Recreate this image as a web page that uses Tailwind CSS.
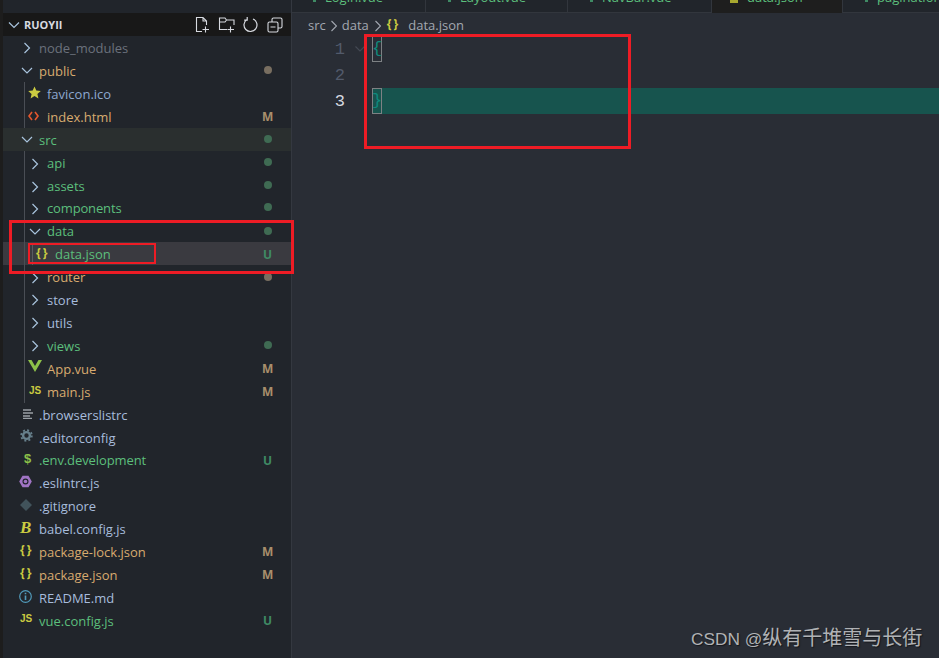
<!DOCTYPE html>
<html>
<head>
<meta charset="utf-8">
<script src="https://cdn.jsdelivr.net/npm/@tailwindcss/browser@4"></script>
</head>
<body class="m-0 overflow-hidden bg-[#292d35] font-['Open_Sans','Noto_Sans_CJK_SC',sans-serif] text-[13px]">
<div class="relative flex h-[658px] w-[939px] overflow-hidden">
  <!-- sidebar -->
  <aside class="relative flex h-full w-[292px] shrink-0 flex-col border-l-[3px] border-r border-l-[#1d1d1d] border-r-[#343840] bg-[#21252b]">
    <div class="h-[13px] shrink-0"></div>
    <div class="flex h-[23px] shrink-0 items-center bg-[#181818] pl-[4px] text-[#d7dae0]">
      <svg class="w-[12px] h-[12px] ml-[1px]" viewBox="0 0 12 12" fill="none" stroke="#a9c4de" stroke-width="1.2"><path d="M1 3.5 6 8.5 11 3.5"/></svg>
      <span class="ml-[4px] text-[11px] font-bold leading-none">RUOYII</span>
      <div class="ml-auto mr-[7px] flex items-center gap-[6px]">
        <svg class="h-[18px] w-[18px]" viewBox="0 0 18 18" fill="none" stroke="#d7dae0" stroke-width="1.1"><path d="M8 15.5H2.5V1.5H9L12.5 5V9M9 1.5V5H12.5M11.5 10.5V16.5M8.5 13.5H15"/></svg>
        <svg class="h-[18px] w-[18px]" viewBox="0 0 18 18" fill="none" stroke="#d7dae0" stroke-width="1.1"><path d="M9 13.5H1.5V2H7L8.5 4H16V9M1.5 6H7L8.5 4M12.5 10.5V16.5M9.5 13.5H16"/></svg>
        <svg class="h-[18px] w-[18px]" viewBox="0 0 18 18" fill="none" stroke="#d7dae0" stroke-width="1.2"><path d="M5 3.5A6.5 6.5 0 1 0 11 3M5.2 1V4.2H2.2"/></svg>
        <svg class="h-[18px] w-[18px]" viewBox="0 0 18 18" fill="none" stroke="#d7dae0" stroke-width="1.1"><rect x="2" y="6" width="10" height="10" rx="1.5"/><path d="M6 6V3.5Q6 2 7.5 2H14.5Q16 2 16 3.5V10.5Q16 12 14.5 12H12M4.5 11H9.5"/></svg>
      </div>
    </div>

    <!-- tree -->
    <div class="flex flex-col leading-none [&>div]:pt-[2px]">
      <div class="flex h-[22.92px] items-center pl-[18px] text-[#6b717c]">
        <span class="flex w-[18px] justify-start pl-[2px]"><svg class="h-[12px] w-[8px]" viewBox="0 0 8 12" fill="none" stroke="#a9c4de" stroke-width="1.2"><path d="M1.5 1 6.5 6 1.5 11"/></svg></span>node_modules
      </div>
      <div class="flex h-[22.92px] items-center pl-[18px] text-[#d8ab6f]">
        <span class="flex w-[18px]"><svg class="h-[8px] w-[12px]" viewBox="0 0 12 8" fill="none" stroke="#a9c4de" stroke-width="1.2"><path d="M1 1 6 6 11 1"/></svg></span>public
        <span class="ml-auto mr-[19px] h-[8px] w-[8px] -translate-y-px rounded-full bg-[#786e60]"></span>
      </div>
      <div class="flex h-[22.92px] items-center pl-[25px] text-[#8ea9d0]">
        <span class="flex w-[19px]"><svg class="h-[13px] w-[13px] -translate-y-[2px]" viewBox="0 0 13 13"><path fill="#cbcb41" d="M6.5.5 8.3 4.6 12.8 5 9.4 8 10.4 12.4 6.5 10.1 2.6 12.4 3.6 8 .2 5 4.7 4.6Z"/></svg></span>favicon.ico
      </div>
      <div class="flex h-[22.92px] items-center pl-[25px] text-[#d8ab6f]">
        <span class="flex w-[19px]"><svg class="h-[10px] w-[11px] -translate-y-px" viewBox="0 0 11 10" fill="none" stroke="#e4572e" stroke-width="1.6"><path d="M4 1 1 5 4 9M7 1 10 5 7 9"/></svg></span>index.html
        <span class="ml-auto mr-[18px] w-[11px] text-center text-[12px] font-bold text-[#a88f6c]">M</span>
      </div>
      <div class="flex h-[22.92px] items-center bg-[#2a2f2f] pl-[18px] text-[#5cbf7c]">
        <span class="flex w-[18px]"><svg class="h-[8px] w-[12px]" viewBox="0 0 12 8" fill="none" stroke="#a9c4de" stroke-width="1.2"><path d="M1 1 6 6 11 1"/></svg></span>src
        <span class="ml-auto mr-[19px] h-[8px] w-[8px] -translate-y-px rounded-full bg-[#3f6b53]"></span>
      </div>
      <div class="flex h-[22.92px] items-center pl-[26px] pt-[4px]! text-[#5cbf7c]">
        <span class="flex w-[18px] pl-[2px]"><svg class="h-[12px] w-[8px]" viewBox="0 0 8 12" fill="none" stroke="#a9c4de" stroke-width="1.2"><path d="M1.5 1 6.5 6 1.5 11"/></svg></span>api
        <span class="ml-auto mr-[19px] h-[8px] w-[8px] -translate-y-[2px] rounded-full bg-[#3f6b53]"></span>
      </div>
      <div class="flex h-[22.92px] items-center pl-[26px] pt-[4px]! text-[#5cbf7c]">
        <span class="flex w-[18px] pl-[2px]"><svg class="h-[12px] w-[8px]" viewBox="0 0 8 12" fill="none" stroke="#a9c4de" stroke-width="1.2"><path d="M1.5 1 6.5 6 1.5 11"/></svg></span>assets
        <span class="ml-auto mr-[19px] h-[8px] w-[8px] -translate-y-[2px] rounded-full bg-[#3f6b53]"></span>
      </div>
      <div class="flex h-[22.92px] items-center pl-[26px] text-[#5cbf7c]">
        <span class="flex w-[18px] pl-[2px]"><svg class="h-[12px] w-[8px]" viewBox="0 0 8 12" fill="none" stroke="#a9c4de" stroke-width="1.2"><path d="M1.5 1 6.5 6 1.5 11"/></svg></span><span class="tracking-[-0.15px]">components</span>
        <span class="ml-auto mr-[19px] h-[8px] w-[8px] -translate-y-[2px] rounded-full bg-[#3f6b53]"></span>
      </div>
      <div class="flex h-[22.92px] items-center pl-[26px] text-[#5cbf7c]">
        <span class="flex w-[18px]"><svg class="h-[8px] w-[12px]" viewBox="0 0 12 8" fill="none" stroke="#a9c4de" stroke-width="1.2"><path d="M1 1 6 6 11 1"/></svg></span>data
        <span class="ml-auto mr-[19px] h-[8px] w-[8px] -translate-y-px rounded-full bg-[#3f6b53]"></span>
      </div>
      <div class="flex h-[22.92px] items-center bg-[#3a3a40] pl-[33px] text-[#5cbf7c]">
        <span class="flex w-[19px] -translate-y-[2px] text-[12px] font-bold tracking-[2px] text-[#cbcb41]">{}</span>data.json
        <span class="ml-auto mr-[18px] w-[11px] text-center text-[12px] font-bold text-[#3f8a64]">U</span>
      </div>
      <div class="flex h-[22.92px] items-center pl-[26px] text-[#d8ab6f]">
        <span class="flex w-[18px] pl-[2px]"><svg class="h-[12px] w-[8px]" viewBox="0 0 8 12" fill="none" stroke="#a9c4de" stroke-width="1.2"><path d="M1.5 1 6.5 6 1.5 11"/></svg></span>router
        <span class="ml-auto mr-[19px] h-[8px] w-[8px] -translate-y-px rounded-full bg-[#786e60]"></span>
      </div>
      <div class="flex h-[22.92px] items-center pl-[26px] text-[#a7bcdc]">
        <span class="flex w-[18px] pl-[2px]"><svg class="h-[12px] w-[8px]" viewBox="0 0 8 12" fill="none" stroke="#a9c4de" stroke-width="1.2"><path d="M1.5 1 6.5 6 1.5 11"/></svg></span>store
      </div>
      <div class="flex h-[22.92px] items-center pl-[26px] text-[#a7bcdc]">
        <span class="flex w-[18px] pl-[2px]"><svg class="h-[12px] w-[8px]" viewBox="0 0 8 12" fill="none" stroke="#a9c4de" stroke-width="1.2"><path d="M1.5 1 6.5 6 1.5 11"/></svg></span>utils
      </div>
      <div class="flex h-[22.92px] items-center pl-[26px] text-[#5cbf7c]">
        <span class="flex w-[18px] pl-[2px]"><svg class="h-[12px] w-[8px]" viewBox="0 0 8 12" fill="none" stroke="#a9c4de" stroke-width="1.2"><path d="M1.5 1 6.5 6 1.5 11"/></svg></span>views
        <span class="ml-auto mr-[19px] h-[8px] w-[8px] -translate-y-px rounded-full bg-[#3f6b53]"></span>
      </div>
      <div class="flex h-[22.92px] items-center pl-[26px] text-[#d8ab6f]">
        <span class="flex w-[18px]"><svg class="h-[12px] w-[14px] -translate-x-px -translate-y-[3px]" viewBox="0 0 14 12"><path fill="#8dc149" d="M0 0H3.5L7 6 10.5 0H14L7 12Z"/></svg></span>App.vue
        <span class="ml-auto mr-[18px] w-[11px] text-center text-[12px] font-bold text-[#a88f6c]">M</span>
      </div>
      <div class="flex h-[22.92px] items-center pl-[26px] text-[#d8ab6f]">
        <span class="flex w-[18px] -translate-y-px font-['Liberation_Sans',sans-serif] text-[10px] font-bold text-[#cbcb41]">JS</span>main.js
        <span class="ml-auto mr-[18px] w-[11px] text-center text-[12px] font-bold text-[#a88f6c]">M</span>
      </div>
      <div class="flex h-[22.92px] items-center pl-[20px] pt-[4px]! text-[#a7bcdc]">
        <span class="flex w-[16px]"><svg class="h-[10px] w-[10px] -translate-y-[2px]" viewBox="0 0 10 10" stroke="#9aa0a6" stroke-width="1.6"><path d="M0 1H8M0 4H10M0 7H7M0 9.5H9"/></svg></span>.browserslistrc
      </div>
      <div class="flex h-[22.92px] items-center pl-[17px] pt-[4px]! text-[#a7bcdc]">
        <span class="flex w-[19px]"><svg class="h-[13px] w-[13px] -translate-y-[3px]" viewBox="0 0 13 13" fill="none"><circle cx="6.5" cy="6.5" r="3.4" stroke="#67808c" stroke-width="2.4"/><circle cx="6.5" cy="6.5" r="5.3" stroke="#67808c" stroke-width="1.8" stroke-dasharray="2 2.16"/></svg></span>.editorconfig
      </div>
      <div class="flex h-[22.92px] items-center pl-[21px] text-[#5cbf7c]">
        <span class="flex w-[15px] -translate-y-[2px] font-['Liberation_Sans',sans-serif] text-[13px] font-bold text-[#8dc149]">$</span><span class="tracking-[-0.1px]">.env.development</span>
        <span class="ml-auto mr-[18px] w-[11px] text-center text-[12px] font-bold text-[#3f8a64]">U</span>
      </div>
      <div class="flex h-[22.92px] items-center pl-[16px] text-[#a7bcdc]">
        <span class="flex w-[20px]"><svg class="h-[13px] w-[13px] -translate-y-[2px]" viewBox="0 0 13 13"><path fill="#a074c4" d="M3.5.8H9.5L12.8 6.5 9.5 12.2H3.5L.2 6.5Z"/><circle cx="6.5" cy="6.5" r="3" fill="#21252b"/><circle cx="6.5" cy="6.5" r="1.8" fill="#a074c4"/></svg></span>.eslintrc.js
      </div>
      <div class="flex h-[22.92px] items-center pl-[17px] text-[#a7bcdc]">
        <span class="flex w-[19px]"><svg class="h-[12px] w-[12px] -translate-y-[2px]" viewBox="0 0 12 12"><path fill="#41535b" d="M6 0 12 6 6 12 0 6Z"/></svg></span>.gitignore
      </div>
      <div class="flex h-[22.92px] items-center pl-[17px] text-[#a7bcdc]">
        <span class="flex w-[19px] -translate-y-[2px] font-['Liberation_Serif',serif] text-[17px] font-bold italic text-[#cbcb41]">B</span>babel.config.js
      </div>
      <div class="flex h-[22.92px] items-center pl-[17px] text-[#d8ab6f]">
        <span class="flex w-[19px] -translate-y-[2px] text-[12px] font-bold tracking-[2px] text-[#cbcb41]">{}</span>package-lock.json
        <span class="ml-auto mr-[18px] w-[11px] text-center text-[12px] font-bold text-[#a88f6c]">M</span>
      </div>
      <div class="flex h-[22.92px] items-center pl-[17px] text-[#d8ab6f]">
        <span class="flex w-[19px] -translate-y-[2px] text-[12px] font-bold tracking-[2px] text-[#cbcb41]">{}</span>package.json
        <span class="ml-auto mr-[18px] w-[11px] text-center text-[12px] font-bold text-[#a88f6c]">M</span>
      </div>
      <div class="flex h-[22.92px] items-center pl-[16px] text-[#a7bcdc]">
        <span class="flex w-[20px]"><svg class="h-[13px] w-[13px] -translate-y-[2px]" viewBox="0 0 13 13" fill="none" stroke="#519aba"><circle cx="6.5" cy="6.5" r="5.8" stroke-width="1.2"/><path stroke-width="1.6" d="M6.5 5.5V10M6.5 2.8V4.2"/></svg></span>README.md
      </div>
      <div class="flex h-[22.92px] items-center pl-[17px] text-[#5cbf7c]">
        <span class="flex w-[19px] -translate-y-[2px] font-['Liberation_Sans',sans-serif] text-[10px] font-bold text-[#cbcb41]">JS</span>vue.config.js
        <span class="ml-auto mr-[18px] w-[11px] text-center text-[12px] font-bold text-[#3f8a64]">U</span>
      </div>
    </div>

    <!-- indent guides lying over the rows -->
    <span class="absolute left-[21px] top-[82px] h-[46px] w-px bg-[#4a4e55]"></span>
    <span class="absolute left-[21px] top-[151px] h-[252px] w-px bg-[#4a4e55]"></span>
    <span class="absolute left-[29px] top-[243px] h-[22px] w-px bg-[#585b60]"></span>
  </aside>

  <!-- editor -->
  <main class="flex min-w-0 flex-1 flex-col">
    <div class="flex h-[13px] shrink-0 border-b border-[#32363d] bg-[#21252b] text-[13px] leading-none text-[#5cbf7c]">
      <div class="flex h-[12px] w-[134px] items-start overflow-hidden border-r border-[#32363d] pl-[21px]"><span class="mr-[9px] mt-0 h-[2px] w-[3px] shrink-0 bg-[#3f8a64]"></span><span class="-mt-[9px]">Login.vue</span></div>
      <div class="flex h-[12px] w-[142px] items-start overflow-hidden border-r border-[#32363d] pl-[22px]"><span class="mr-[9px] h-[2px] w-[3px] shrink-0 bg-[#3f8a64]"></span><span class="-mt-[9px]">Layout.vue</span></div>
      <div class="flex h-[12px] w-[144px] items-start overflow-hidden border-r border-[#32363d] pl-[22px]"><span class="mr-[9px] h-[2px] w-[3px] shrink-0 bg-[#3f8a64]"></span><span class="-mt-[9px]">NavBar.vue</span></div>
      <div class="flex h-[13px] w-[130px] items-start overflow-hidden bg-[#1e1e1e] pl-[18px]"><span class="mr-[9px] h-[3px] w-[8px] shrink-0 bg-[#a8a82f]"></span><span class="-mt-[9px]">data.json</span></div>
      <div class="flex h-[12px] flex-1 items-start overflow-hidden border-l border-[#32363d] pl-[22px]"><span class="mr-[9px] h-[2px] w-[3px] shrink-0 bg-[#3f8a64]"></span><span class="-mt-[9px]">pagination</span></div>
    </div>
    <div class="flex h-[23px] shrink-0 items-center pl-[16px] pt-[2px] leading-none text-[#a3a8b1]">
      src
      <svg class="mx-[5px] h-[12px] w-[6px]" viewBox="0 0 6 12" fill="none" stroke="#a3a8b1" stroke-width="1.1"><path d="M.5 1 5.5 6 .5 11"/></svg>
      data
      <svg class="mx-[6px] h-[12px] w-[6px]" viewBox="0 0 6 12" fill="none" stroke="#a3a8b1" stroke-width="1.1"><path d="M.5 1 5.5 6 .5 11"/></svg>
      <span class="mr-[8px] -translate-y-[2px] text-[12px] font-bold tracking-[2px] text-[#cbcb41]">{}</span>data.json
    </div>
    <div class="flex flex-col font-['Liberation_Mono',monospace] text-[17px]">
      <div class="flex h-[26px] items-center text-[#525a6b]">
        <span class="w-[53px] pt-[2px] text-right">1</span>
        <svg class="ml-[10px] h-[6px] w-[10px]" viewBox="0 0 10 6" fill="none" stroke="#454a54" stroke-width="1.1"><path d="M.5.5 5 5 9.5.5"/></svg>
        <span class="ml-[7px] flex h-[26px] w-[10px] items-center justify-center border border-[#7d8184] text-[#0e8a7d]">{</span>
      </div>
      <div class="flex h-[26px] items-center text-[#525a6b]">
        <span class="w-[53px] pt-[2px] text-right">2</span>
      </div>
      <div class="flex h-[26px] items-center bg-[linear-gradient(to_right,#292d35_80px,#17544e_80px)] text-[#d7dae0]">
        <span class="w-[53px] pt-[2px] text-right">3</span>
        <span class="ml-[27px] flex h-[26px] w-[10px] items-center justify-center border border-[#7d8184] text-[#0e8a7d]">}</span>
      </div>
    </div>
  </main>

  <!-- annotations -->
  <div class="absolute left-[9px] top-[220px] h-[54px] w-[285px] border-[3px] border-[#ee1c25]"></div>
  <div class="absolute left-[28px] top-[243px] h-[21px] w-[128px] border-[2px] border-[#ee1c25]"></div>
  <div class="absolute left-[364px] top-[34px] h-[115px] w-[267px] border-[3px] border-[#ee1c25]"></div>

  <!-- watermark -->
  <div class="absolute left-[691px] top-[626px] font-['Liberation_Sans','Noto_Sans_CJK_SC',sans-serif] text-[17.3px] leading-[24px] text-[#b0b2b5] [text-shadow:1px_1px_1px_#15171b]">CSDN @<span class="text-[20px]">纵有千堆雪与长街</span></div>
</div>
</body>
</html>
